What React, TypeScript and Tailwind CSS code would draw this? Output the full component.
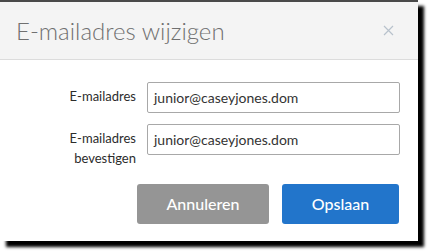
import React from 'react'

const font = { fontFamily: 'Lato, "Open Sans", sans-serif' }

function Field({ label, value }: { label: React.ReactNode; value: string }) {
  return (
    <div className="flex items-start">
      <div className="w-[136px] pt-[4px] text-right text-[13px] leading-[20px] text-[#2c2c2c]">
        {label}
      </div>
      <div className="ml-[11px] flex h-[31px] w-[253px] items-center rounded-[2px] border border-[#a8a8a8] bg-white px-[6px] text-[14px] text-[#333]">
        {value}
      </div>
    </div>
  )
}

export default function App() {
  return (
    <div className="h-[252px] w-[428px] bg-white" style={font}>
      <div className="w-[418px] border-t-2 border-[#4a4a4a] bg-white shadow-[6px_6px_3px_#000]">
        <div className="flex h-[58px] items-center justify-between border-b border-[#dcdcdc] bg-[#f4f4f4] pl-[16px] pr-[24px]">
          <h1 className="text-[24px] font-light text-[#707070]">E-mailadres wijzigen</h1>
          <svg width="11" height="11" viewBox="0 0 11 11" className="text-[#b8c2cc]">
            <path d="M1 1L10 10M10 1L1 10" stroke="currentColor" strokeWidth="1.2" />
          </svg>
        </div>
        <div className="flex flex-col gap-[11px] pt-[22px]">
          <Field label="E-mailadres" value="junior@caseyjones.dom" />
          <Field
            label={
              <>
                E-mailadres
                <br />
                bevestigen
              </>
            }
            value="junior@caseyjones.dom"
          />
        </div>
        <div className="flex justify-end gap-[13px] pt-[16px] pb-[17px] pr-[19px]">
          <button className="h-[40px] w-[132px] rounded-[3px] bg-[#959595] text-[16px] font-medium text-white">
            Annuleren
          </button>
          <button className="h-[40px] w-[117px] rounded-[3px] bg-[#2275cb] text-[16px] font-medium text-white">
            Opslaan
          </button>
        </div>
      </div>
    </div>
  )
}
